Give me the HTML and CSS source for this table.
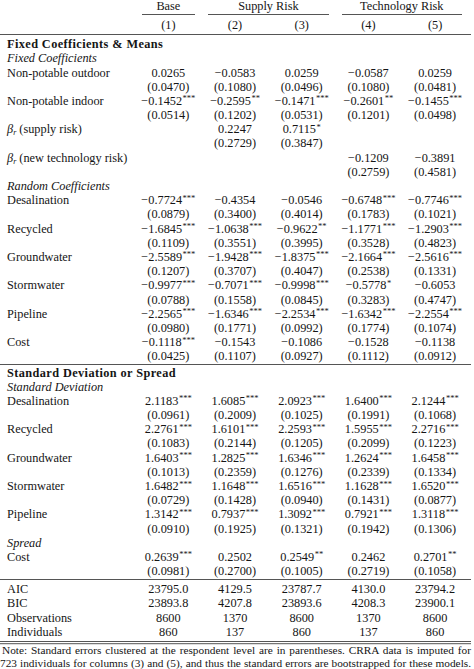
FILE: index.html
```html
<!DOCTYPE html>
<html>
<head>
<meta charset="utf-8">
<title>Table</title>
<link rel="stylesheet" href="styles.css">
</head>
<body>
<div class="page">
  <div class="hdr1">
    <div></div>
    <div class="grp"><span class="gt">Base</span></div>
    <div class="grp"><span class="gt">Supply Risk</span></div>
    <div class="grp"><span class="gt">Technology Risk</span></div>
  </div>
  <div class="row hdr2"><div></div><div class="c">(1)</div><div class="c">(2)</div><div class="c">(3)</div><div class="c">(4)</div><div class="c">(5)</div></div>
  <div class="rule thick"></div>

  <div class="row"><div class="lbl b">Fixed Coefficients &amp; Means</div></div>
  <div class="row"><div class="lbl i">Fixed Coefficients</div></div>
  <div class="row"><div class="lbl">Non-potable outdoor</div><div class="c">0.0265</div><div class="c">−0.0583</div><div class="c">0.0259</div><div class="c">−0.0587</div><div class="c">0.0259</div></div>
  <div class="row"><div></div><div class="c">(0.0470)</div><div class="c">(0.1080)</div><div class="c">(0.0496)</div><div class="c">(0.1080)</div><div class="c">(0.0481)</div></div>
  <div class="row"><div class="lbl">Non-potable indoor</div><div class="c">−0.1452<span class="st">***</span></div><div class="c">−0.2595<span class="st">**</span></div><div class="c">−0.1471<span class="st">***</span></div><div class="c">−0.2601<span class="st">**</span></div><div class="c">−0.1455<span class="st">***</span></div></div>
  <div class="row"><div></div><div class="c">(0.0514)</div><div class="c">(0.1202)</div><div class="c">(0.0531)</div><div class="c">(0.1201)</div><div class="c">(0.0498)</div></div>
  <div class="row"><div class="lbl"><span class="i">β<sub>r</sub></span> (supply risk)</div><div></div><div class="c">0.2247</div><div class="c">0.7115<span class="st">*</span></div><div></div><div></div></div>
  <div class="row"><div></div><div></div><div class="c">(0.2729)</div><div class="c">(0.3847)</div><div></div><div></div></div>
  <div class="row"><div class="lbl"><span class="i">β<sub>r</sub></span> (new technology risk)</div><div></div><div></div><div></div><div class="c">−0.1209</div><div class="c">−0.3891</div></div>
  <div class="row"><div></div><div></div><div></div><div></div><div class="c">(0.2759)</div><div class="c">(0.4581)</div></div>

  <div class="row"><div class="lbl i">Random Coefficients</div></div>
  <div class="row"><div class="lbl">Desalination</div><div class="c">−0.7724<span class="st">***</span></div><div class="c">−0.4354</div><div class="c">−0.0546</div><div class="c">−0.6748<span class="st">***</span></div><div class="c">−0.7746<span class="st">***</span></div></div>
  <div class="row"><div></div><div class="c">(0.0879)</div><div class="c">(0.3400)</div><div class="c">(0.4014)</div><div class="c">(0.1783)</div><div class="c">(0.1021)</div></div>
  <div class="row"><div class="lbl">Recycled</div><div class="c">−1.6845<span class="st">***</span></div><div class="c">−1.0638<span class="st">***</span></div><div class="c">−0.9622<span class="st">**</span></div><div class="c">−1.1771<span class="st">***</span></div><div class="c">−1.2903<span class="st">***</span></div></div>
  <div class="row"><div></div><div class="c">(0.1109)</div><div class="c">(0.3551)</div><div class="c">(0.3995)</div><div class="c">(0.3528)</div><div class="c">(0.4823)</div></div>
  <div class="row"><div class="lbl">Groundwater</div><div class="c">−2.5589<span class="st">***</span></div><div class="c">−1.9428<span class="st">***</span></div><div class="c">−1.8375<span class="st">***</span></div><div class="c">−2.1664<span class="st">***</span></div><div class="c">−2.5616<span class="st">***</span></div></div>
  <div class="row"><div></div><div class="c">(0.1207)</div><div class="c">(0.3707)</div><div class="c">(0.4047)</div><div class="c">(0.2538)</div><div class="c">(0.1331)</div></div>
  <div class="row"><div class="lbl">Stormwater</div><div class="c">−0.9977<span class="st">***</span></div><div class="c">−0.7071<span class="st">***</span></div><div class="c">−0.9998<span class="st">***</span></div><div class="c">−0.5778<span class="st">*</span></div><div class="c">−0.6053</div></div>
  <div class="row"><div></div><div class="c">(0.0788)</div><div class="c">(0.1558)</div><div class="c">(0.0845)</div><div class="c">(0.3283)</div><div class="c">(0.4747)</div></div>
  <div class="row"><div class="lbl">Pipeline</div><div class="c">−2.2565<span class="st">***</span></div><div class="c">−1.6346<span class="st">***</span></div><div class="c">−2.2534<span class="st">***</span></div><div class="c">−1.6342<span class="st">***</span></div><div class="c">−2.2554<span class="st">***</span></div></div>
  <div class="row"><div></div><div class="c">(0.0980)</div><div class="c">(0.1771)</div><div class="c">(0.0992)</div><div class="c">(0.1774)</div><div class="c">(0.1074)</div></div>
  <div class="row"><div class="lbl">Cost</div><div class="c">−0.1118<span class="st">***</span></div><div class="c">−0.1543</div><div class="c">−0.1086</div><div class="c">−0.1528</div><div class="c">−0.1138</div></div>
  <div class="row"><div></div><div class="c">(0.0425)</div><div class="c">(0.1107)</div><div class="c">(0.0927)</div><div class="c">(0.1112)</div><div class="c">(0.0912)</div></div>
  <div class="rule mid"></div>

  <div class="row"><div class="lbl b">Standard Deviation or Spread</div></div>
  <div class="row"><div class="lbl i">Standard Deviation</div></div>
  <div class="row"><div class="lbl">Desalination</div><div class="c">2.1183<span class="st">***</span></div><div class="c">1.6085<span class="st">***</span></div><div class="c">2.0923<span class="st">***</span></div><div class="c">1.6400<span class="st">***</span></div><div class="c">2.1244<span class="st">***</span></div></div>
  <div class="row"><div></div><div class="c">(0.0961)</div><div class="c">(0.2009)</div><div class="c">(0.1025)</div><div class="c">(0.1991)</div><div class="c">(0.1068)</div></div>
  <div class="row"><div class="lbl">Recycled</div><div class="c">2.2761<span class="st">***</span></div><div class="c">1.6101<span class="st">***</span></div><div class="c">2.2593<span class="st">***</span></div><div class="c">1.5955<span class="st">***</span></div><div class="c">2.2716<span class="st">***</span></div></div>
  <div class="row"><div></div><div class="c">(0.1083)</div><div class="c">(0.2144)</div><div class="c">(0.1205)</div><div class="c">(0.2099)</div><div class="c">(0.1223)</div></div>
  <div class="row"><div class="lbl">Groundwater</div><div class="c">1.6403<span class="st">***</span></div><div class="c">1.2825<span class="st">***</span></div><div class="c">1.6346<span class="st">***</span></div><div class="c">1.2624<span class="st">***</span></div><div class="c">1.6458<span class="st">***</span></div></div>
  <div class="row"><div></div><div class="c">(0.1013)</div><div class="c">(0.2359)</div><div class="c">(0.1276)</div><div class="c">(0.2339)</div><div class="c">(0.1334)</div></div>
  <div class="row"><div class="lbl">Stormwater</div><div class="c">1.6482<span class="st">***</span></div><div class="c">1.1648<span class="st">***</span></div><div class="c">1.6516<span class="st">***</span></div><div class="c">1.1628<span class="st">***</span></div><div class="c">1.6520<span class="st">***</span></div></div>
  <div class="row"><div></div><div class="c">(0.0729)</div><div class="c">(0.1428)</div><div class="c">(0.0940)</div><div class="c">(0.1431)</div><div class="c">(0.0877)</div></div>
  <div class="row"><div class="lbl">Pipeline</div><div class="c">1.3142<span class="st">***</span></div><div class="c">0.7937<span class="st">***</span></div><div class="c">1.3092<span class="st">***</span></div><div class="c">0.7921<span class="st">***</span></div><div class="c">1.3118<span class="st">***</span></div></div>
  <div class="row"><div></div><div class="c">(0.0910)</div><div class="c">(0.1925)</div><div class="c">(0.1321)</div><div class="c">(0.1942)</div><div class="c">(0.1306)</div></div>
  <div class="row"><div class="lbl i">Spread</div></div>
  <div class="row"><div class="lbl">Cost</div><div class="c">0.2639<span class="st">***</span></div><div class="c">0.2502</div><div class="c">0.2549<span class="st">**</span></div><div class="c">0.2462</div><div class="c">0.2701<span class="st">**</span></div></div>
  <div class="row"><div></div><div class="c">(0.0981)</div><div class="c">(0.2700)</div><div class="c">(0.1005)</div><div class="c">(0.2719)</div><div class="c">(0.1058)</div></div>
  <div class="rule mid low"></div>

  <div class="row"><div class="lbl">AIC</div><div class="c">23795.0</div><div class="c">4129.5</div><div class="c">23787.7</div><div class="c">4130.0</div><div class="c">23794.2</div></div>
  <div class="row"><div class="lbl">BIC</div><div class="c">23893.8</div><div class="c">4207.8</div><div class="c">23893.6</div><div class="c">4208.3</div><div class="c">23900.1</div></div>
  <div class="row"><div class="lbl">Observations</div><div class="c">8600</div><div class="c">1370</div><div class="c">8600</div><div class="c">1370</div><div class="c">8600</div></div>
  <div class="row"><div class="lbl">Individuals</div><div class="c">860</div><div class="c">137</div><div class="c">860</div><div class="c">137</div><div class="c">860</div></div>
  <div class="rule dbl"></div>

  <p class="note">Note: Standard errors clustered at the respondent level are in parentheses. CRRA data is imputed for 723 individuals for columns (3) and (5), and thus the standard errors are bootstrapped for these models.</p>
</div>
</body>
</html>
```

FILE: styles.css
```css
html, body {
  margin: 0;
  padding: 0;
  background: #ffffff;
}

.page {
  width: 471px;
  font-family: "Liberation Serif", "Times New Roman", serif;
  font-size: 12.3px;
  color: #151515;
}

.hdr1 {
  display: grid;
  grid-template-columns: 135px 66.7px 133.4px 133.4px;
}

.grp {
  padding: 0 6.5px;
}

.gt {
  display: block;
  text-align: center;
  line-height: 13px;
  padding-bottom: 1.2px;
  border-bottom: 0.8px solid #555;
}

.row {
  display: grid;
  grid-template-columns: 135px repeat(5, 66.7px);
  height: 14.2px;
  line-height: 14.2px;
  white-space: nowrap;
}

.hdr2 {
  margin-top: 3px;
}

.lbl {
  padding-left: 7px;
}

.c {
  text-align: center;
}

.b {
  font-weight: bold;
  letter-spacing: 0.4px;
}

.i {
  font-style: italic;
}

.st {
  font-size: 8.5px;
  position: relative;
  top: -3.5px;
  line-height: 0;
  margin-left: 0.5px;
}

sub {
  font-size: 8px;
  line-height: 0;
  vertical-align: -2px;
}

.rule {
  background: #555;
}

.thick {
  height: 1.6px;
  margin-top: 1.5px;
  margin-bottom: 1.7px;
}

.mid {
  height: 0.9px;
  margin-top: 0.3px;
  margin-bottom: 0.9px;
}

.low {
  margin-top: 1px;
  margin-bottom: 2px;
}

.dbl {
  height: 0.8px;
  margin-top: 1.5px;
  margin-bottom: 2px;
  box-shadow: 0 2.2px 0 #555;
}

.note {
  margin: 3px 0 0 0;
  font-size: 11.3px;
  line-height: 13px;
  text-align: justify;
  text-align-last: justify;
  text-indent: 2px;
}
```
